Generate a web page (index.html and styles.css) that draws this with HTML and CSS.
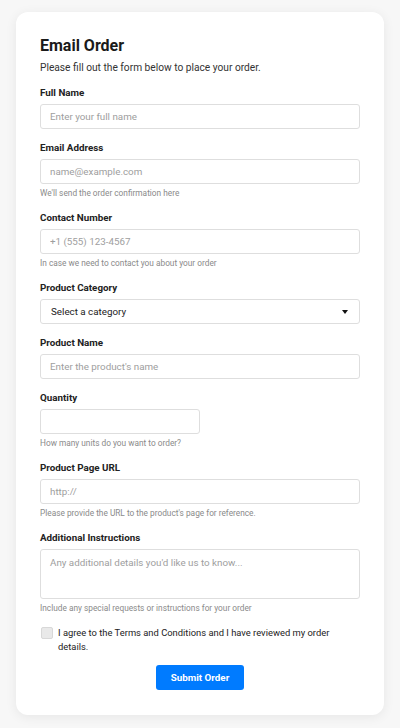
FILE: index.html
```html
<!DOCTYPE html>
<html lang="en">
<head>
  <meta charset="UTF-8">
  <meta name="viewport" content="width=device-width, initial-scale=1.0">
  <title>Email Order</title>
  <link rel="stylesheet" href="styles.css">
</head>
<body>
  <div class="card">
    <h1>Email Order</h1>
    <p class="intro">Please fill out the form below to place your order.</p>

    <form>
      <div class="field">
        <label for="fullName">Full Name</label>
        <input type="text" id="fullName" class="form-control" placeholder="Enter your full name">
      </div>

      <div class="field">
        <label for="email">Email Address</label>
        <input type="email" id="email" class="form-control" placeholder="name@example.com">
        <div class="help">We'll send the order confirmation here</div>
      </div>

      <div class="field">
        <label for="phone">Contact Number</label>
        <input type="tel" id="phone" class="form-control" placeholder="+1 (555) 123-4567">
        <div class="help">In case we need to contact you about your order</div>
      </div>

      <div class="field">
        <label for="category">Product Category</label>
        <div class="select-wrap">
          <select id="category" class="form-control">
            <option>Select a category</option>
            <option>Electronics</option>
            <option>Clothing</option>
            <option>Home &amp; Garden</option>
          </select>
        </div>
      </div>

      <div class="field">
        <label for="productName">Product Name</label>
        <input type="text" id="productName" class="form-control" placeholder="Enter the product's name">
      </div>

      <div class="field">
        <label for="quantity">Quantity</label>
        <input type="number" id="quantity" class="form-control qty" min="1">
        <div class="help">How many units do you want to order?</div>
      </div>

      <div class="field">
        <label for="url">Product Page URL</label>
        <input type="url" id="url" class="form-control" placeholder="http://">
        <div class="help">Please provide the URL to the product's page for reference.</div>
      </div>

      <div class="field">
        <label for="notes">Additional Instructions</label>
        <textarea id="notes" class="form-control notes" placeholder="Any additional details you'd like us to know..."></textarea>
        <div class="help">Include any special requests or instructions for your order</div>
      </div>

      <div class="agree">
        <input type="checkbox" id="terms">
        <label for="terms">I agree to the Terms and Conditions and I have reviewed my order details.</label>
      </div>

      <div class="actions">
        <button type="submit" class="btn">Submit Order</button>
      </div>
    </form>
  </div>
</body>
</html>
```

FILE: styles.css
```css
body {
  margin: 0;
  padding: 12px 16px;
  background-color: #f7f7f7;
  font-family: Roboto, "Noto Sans", sans-serif;
  color: #222;
}

.card {
  background-color: #fff;
  border-radius: 12px;
  padding: 24px 24px 25px;
  box-shadow: 0 2px 12px rgba(0, 0, 0, 0.07);
}

h1 {
  margin: 0;
  font-size: 16px;
  line-height: 20px;
  font-weight: 700;
  color: #1a1a1a;
}

.intro {
  margin: 5px 0 11px;
  font-size: 10.2px;
  line-height: 14px;
  color: #333;
}

.field {
  margin-bottom: 12px;
}

.field > label {
  display: block;
  margin-bottom: 4px;
  font-size: 9.8px;
  line-height: 14px;
  font-weight: 700;
  color: #222;
}

.form-control {
  display: block;
  width: 100%;
  height: 25px;
  box-sizing: border-box;
  padding: 0 9px;
  border: 1px solid #dedede;
  border-radius: 3px;
  background-color: #fff;
  font-family: inherit;
  font-size: 9.8px;
  color: #333;
  outline: none;
}

.form-control::placeholder {
  color: #9e9e9e;
}

.qty {
  width: 160px;
}

.notes {
  height: 50px;
  padding: 7px 9px;
  resize: none;
}

select.form-control {
  appearance: none;
  -webkit-appearance: none;
  padding-left: 10px;
  color: #222;
}

.select-wrap {
  position: relative;
}

/* dropdown caret */
.select-wrap::after {
  content: "";
  position: absolute;
  right: 12px;
  top: 11px;
  border-left: 3px solid transparent;
  border-right: 3px solid transparent;
  border-top: 4px solid #111;
  pointer-events: none;
}

.help {
  margin-top: 4px;
  font-size: 8.3px;
  line-height: 11px;
  color: #8a8a8a;
}

.agree {
  display: flex;
  align-items: flex-start;
  gap: 5px;
  margin-top: 12px;
}

.agree input {
  appearance: none;
  -webkit-appearance: none;
  flex: none;
  width: 12px;
  height: 12px;
  margin: 1px 0 0 1px;
  border: 1px solid #d8d8d8;
  border-radius: 2px;
  background-color: #e9e9e9;
}

.agree label {
  font-size: 9.4px;
  line-height: 14px;
  color: #222;
}

.actions {
  display: flex;
  justify-content: center;
  margin-top: 11px;
}

.btn {
  padding: 0 15px;
  height: 25px;
  border: none;
  border-radius: 3px;
  background-color: #007bff;
  color: #fff;
  font-family: inherit;
  font-size: 9.8px;
  font-weight: 700;
  cursor: pointer;
}
```
